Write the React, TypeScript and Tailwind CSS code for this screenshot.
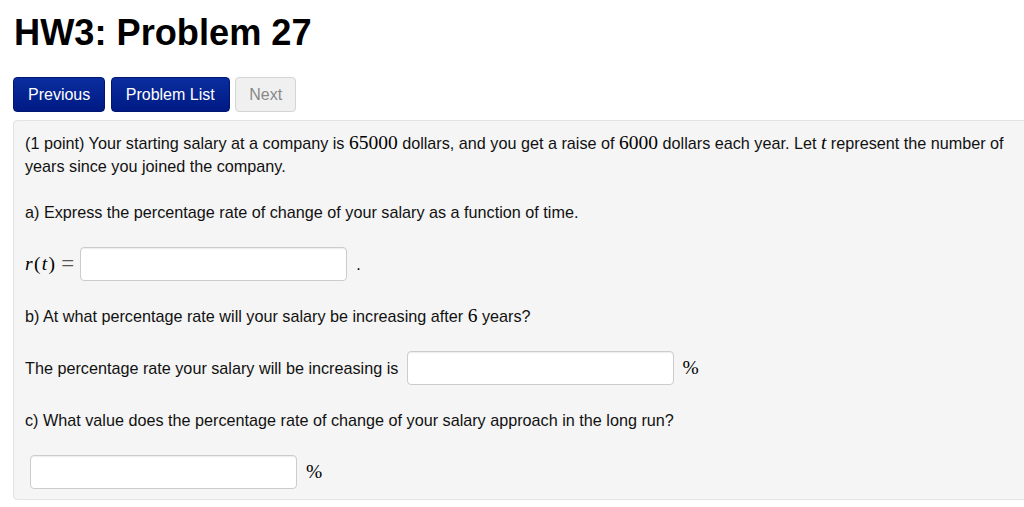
import React from "react";

const SERIF = '"Liberation Serif", "DejaVu Serif", serif';

const M: React.FC<{ children: React.ReactNode; i?: boolean; s?: string }> = ({ children, i, s }) => (
  <span className={`${s ?? "text-[19.5px]"} leading-[0] text-black ${i ? "italic" : ""}`} style={{ fontFamily: SERIF }}>
    {children}
  </span>
);

const Blank: React.FC = () => (
  <span className="inline-block w-[267px] h-[34px] bg-white border border-[#cccccc] rounded-[4px] shadow-[inset_0_1px_1px_rgba(0,0,0,0.075)] align-middle" />
);

export default function App() {
  return (
    <div
      className="w-[1024px] h-[507px] overflow-hidden bg-white text-[#111] pl-[13px]"
      style={{ fontFamily: '"Liberation Sans", Arial, sans-serif' }}
    >
      <h1 className="mt-[13px] ml-[1px] text-[36.2px] leading-[40px] font-bold text-black">HW3: Problem 27</h1>
      <div className="mt-[24px] flex gap-[5.5px]">
        <div className="h-[35px] px-[14px] flex items-center text-[16px] text-white rounded-[4px] border border-[#001670] bg-gradient-to-b from-[#0b2d9e] to-[#001a84]">
          Previous
        </div>
        <div className="h-[35px] px-[14px] flex items-center text-[16px] text-white rounded-[4px] border border-[#001670] bg-gradient-to-b from-[#0b2d9e] to-[#001a84]">
          Problem List
        </div>
        <div className="h-[35px] px-[13px] flex items-center text-[16px] text-[#888888] rounded-[4px] border border-[#d4d4d4] bg-[#f0f0f0]">
          Next
        </div>
      </div>
      <div className="mt-[8px] w-[1030px] h-[380px] bg-[#f5f5f5] border border-[#e3e3e3] rounded-[4px] p-[11px] flex flex-col gap-[24px] text-[16.2px]">
        <p className="leading-[22.5px] whitespace-nowrap">
          (1 point) Your starting salary at a company is <M>65000</M> dollars, and you get a raise of <M>6000</M>{" "}
          dollars each year. Let <M i>t</M> represent the number of
          <br />
          years since you joined the company.
        </p>
        <p className="leading-[22px]">a) Express the percentage rate of change of your salary as a function of time.</p>
        <div className="flex items-center h-[34px]">
          <span className="text-[19.5px] text-black tracking-[1.3px] italic" style={{ fontFamily: SERIF }}>
            r<span className="not-italic">(</span>t<span className="not-italic">)</span>
          </span>
          <span className="ml-[5px] text-[23px] leading-[0] text-[#555]" style={{ fontFamily: SERIF }}>
            =
          </span>
          <span className="ml-[6px] flex">
            <Blank />
          </span>
          <span className="ml-[9px] text-black">.</span>
        </div>
        <p className="leading-[22px]">
          b) At what percentage rate will your salary be increasing after <M>6</M> years?
        </p>
        <div className="flex items-center h-[34px]">
          <span>The percentage rate your salary will be increasing is</span>
          <span className="ml-[9px] flex">
            <Blank />
          </span>
          <span className="ml-[8px] text-[19.5px] text-black" style={{ fontFamily: SERIF }}>
            %
          </span>
        </div>
        <p className="leading-[22px]">
          c) What value does the percentage rate of change of your salary approach in the long run?
        </p>
        <div className="flex items-center h-[34px]">
          <span className="ml-[5px] flex">
            <Blank />
          </span>
          <span className="ml-[9px] text-[19.5px] text-black" style={{ fontFamily: SERIF }}>
            %
          </span>
        </div>
      </div>
    </div>
  );
}
